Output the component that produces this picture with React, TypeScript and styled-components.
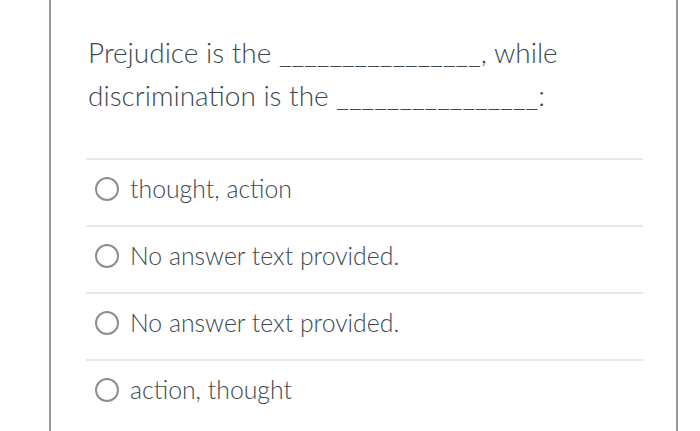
import React, { FC } from "react";
import styled, { createGlobalStyle } from "styled-components";

const GlobalStyle = createGlobalStyle`
  html, body {
    margin: 0;
    padding: 0;
    background: #ffffff;
  }
  body {
    font-family: Lato, "Helvetica Neue", Arial, sans-serif;
    color: #2d3b45;
  }
`;

const SPage = styled.div`
  width: 700px;
  height: 431px;
  overflow: hidden;
  background: #fff;
`;

const SCard = styled.div`
  margin-left: 49px;
  width: 629px;
  height: 431px;
  box-sizing: border-box;
  border-left: 2px solid #9a9a9a;
  border-right: 2px solid #9a9a9a;
  padding: 31px 0 0 37px;
`;

const SQuestion = styled.div`
  width: 530px;
  font-size: 28px;
  line-height: 43px;
  font-weight: 300;
  color: #3d4850;
  margin: 0 0 41px 0;
`;

const SAnswers = styled.div`
  width: 557px;
  margin-left: -2px;
  display: flex;
  flex-direction: column;
`;

const SAnswer = styled.label`
  display: flex;
  align-items: center;
  gap: 11px;
  height: 65px;
  box-sizing: content-box;
  padding: 0 0 0 9px;
  border-top: 2px solid #e6e8ea;
  font-size: 24.8px;
  font-weight: 300;
  color: #3d4850;
`;

const SText = styled.span`
  margin-top: -8px;
`;

const SRadio = styled.span`
  width: 20px;
  height: 20px;
  margin-top: -7px;
  border: 2px solid #8b8f92;
  border-radius: 50%;
  flex-shrink: 0;
`;

const answers = [
  "thought, action",
  "No answer text provided.",
  "No answer text provided.",
  "action, thought",
];

const App: FC = () => {
  return (
    <>
      <GlobalStyle />
      <SPage>
        <SCard>
          <SQuestion>
            Prejudice is the ________________, while discrimination is the
            ________________:
          </SQuestion>
          <SAnswers>
            {answers.map((text, i) => (
              <SAnswer key={i}>
                <SRadio />
                <SText>{text}</SText>
              </SAnswer>
            ))}
          </SAnswers>
        </SCard>
      </SPage>
    </>
  );
};

export default App;
